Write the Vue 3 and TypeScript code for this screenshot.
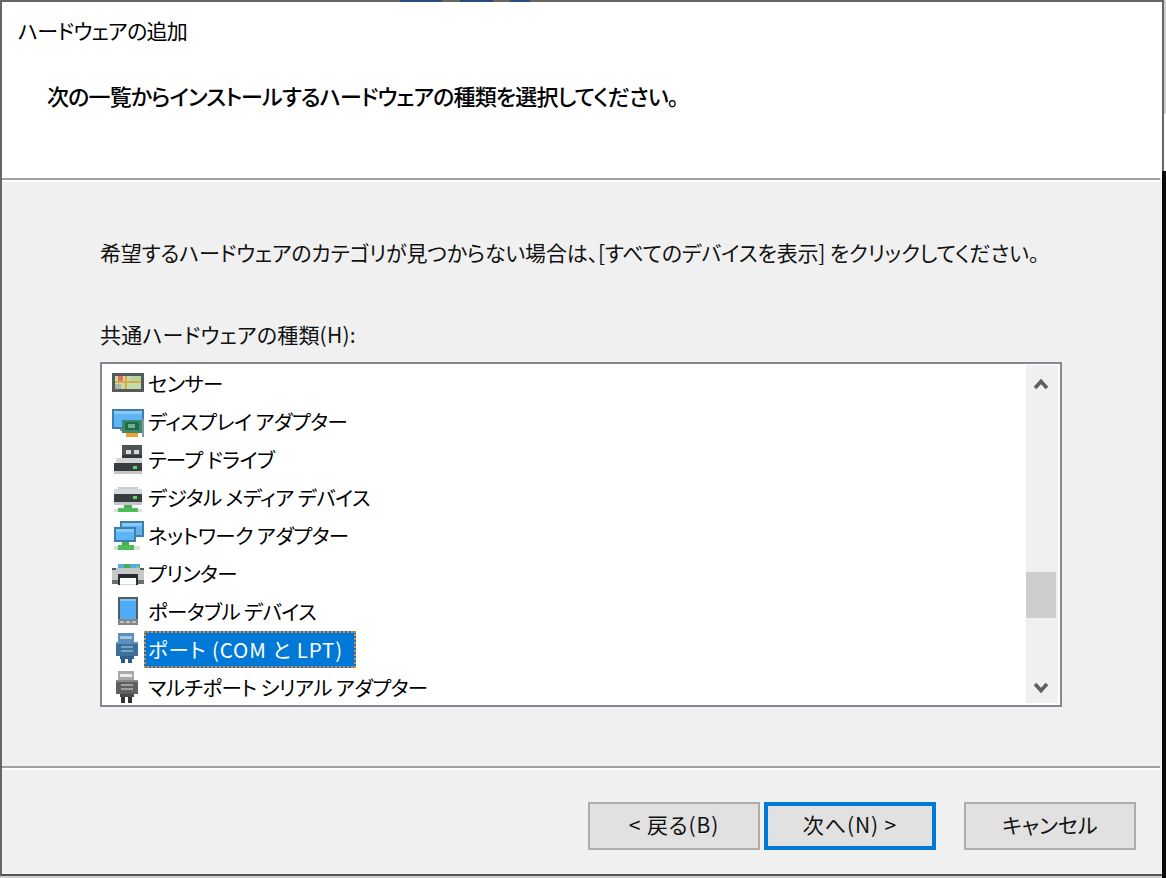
<script setup lang="ts">
type Rect = [number, number, number, number, string]

const monitor = (x: number, y: number, w: number, h: number): Rect[] => [
  [x, y, w, h, '#3f7ea6'],
  [x + 2, y + 2, w - 4, h - 4, '#5db4f6'],
  [x + 2, y + 2, w - 4, 3, '#86c9f8'],
]

const icons: Record<string, Rect[]> = {
  sensor: [
    [0, 6, 32, 19, '#555a5a'],
    [3, 9, 26, 13, '#c5dba8'],
    [3, 14, 26, 2, '#d9a94c'],
    [13, 9, 2, 13, '#d9a94c'],
    [6, 9, 5, 5, '#ea6a6a'],
    [3, 17, 6, 5, '#a9b8a0'],
    [19, 9, 10, 5, '#b5d49c'],
  ],
  display: [
    ...monitor(0, 4, 32, 20),
    [8, 24, 8, 2, '#7f8f9a'],
    [10, 15, 21, 13, '#3c8a6a'],
    [13, 17, 14, 8, '#1f6b4c'],
    [16, 19, 7, 4, '#70b090'],
    [14, 28, 12, 4, '#f0a030'],
    [30, 14, 2, 18, '#8b979e'],
  ],
  tape: [
    [10, 2, 20, 14, '#4e5358'],
    [14, 7, 5, 4, '#d8d8d8'],
    [22, 7, 5, 4, '#d8d8d8'],
    [10, 12, 20, 3, '#33373a'],
    [4, 15, 26, 5, '#d3d5d6'],
    [2, 20, 28, 8, '#3a3d3f'],
    [21, 23, 4, 3, '#55dd55'],
    [2, 28, 28, 3, '#c4c6c7'],
  ],
  media: [
    [6, 6, 20, 2, '#c9cbcc'],
    [2, 8, 28, 5, '#d6d8d9'],
    [2, 13, 28, 8, '#3a3d3f'],
    [21, 15, 4, 3, '#55dd55'],
    [2, 21, 28, 3, '#c4c6c7'],
    [12, 24, 8, 4, '#45b04d'],
    [2, 28, 28, 3, '#dcdfdc'],
    [6, 27, 20, 4, '#50bd58'],
  ],
  network: [
    ...monitor(8, 2, 24, 16),
    ...monitor(2, 8, 22, 15),
    [10, 23, 7, 4, '#45b04d'],
    [2, 27, 26, 4, '#dcdfdc'],
    [6, 26, 16, 5, '#50bd58'],
  ],
  printer: [
    [6, 7, 22, 6, '#5aa9e0'],
    [12, 7, 6, 6, '#45b04d'],
    [24, 9, 3, 3, '#55dd55'],
    [0, 11, 32, 14, '#c6c9ca'],
    [0, 11, 4, 2, '#555a5a'],
    [28, 11, 4, 2, '#555a5a'],
    [0, 23, 32, 4, '#6a6e70'],
    [6, 17, 20, 3, '#2b2d2f'],
    [6, 20, 20, 8, '#2b2d2f'],
    [8, 21, 16, 8, '#ffffff'],
    [8, 27, 16, 1, '#d8d8d8'],
  ],
  portable: [
    [6, 2, 20, 28, '#565a5e'],
    [8, 4, 16, 20, '#4eadf6'],
    [8, 4, 16, 2, '#7cc5f8'],
    [6, 24, 20, 6, '#80868a'],
    [8, 26, 4, 2, '#bcc0c2'],
    [14, 26, 4, 2, '#bcc0c2'],
    [20, 26, 4, 2, '#bcc0c2'],
  ],
  port: [
    [6, 0, 16, 9, '#5b8fc0'],
    [8, 3, 12, 3, '#a5c4de'],
    [4, 9, 22, 14, '#3d7099'],
    [4, 9, 22, 2, '#5b8fc0'],
    [9, 13, 12, 2, '#7ba4c4'],
    [9, 17, 12, 2, '#7ba4c4'],
    [8, 23, 14, 3, '#2f608a'],
    [9, 26, 4, 4, '#245a8c'],
    [16, 26, 4, 4, '#245a8c'],
  ],
  multi: [
    [6, 0, 16, 9, '#a8a8a8'],
    [8, 3, 12, 3, '#ececec'],
    [4, 9, 22, 14, '#606060'],
    [4, 9, 22, 2, '#8a8a8a'],
    [9, 13, 12, 2, '#a0a0a0'],
    [9, 17, 12, 2, '#a0a0a0'],
    [8, 23, 14, 3, '#484848'],
    [9, 26, 4, 6, '#333333'],
    [16, 26, 4, 6, '#333333'],
  ],
}

const rows = [
  { icon: 'sensor', label: 'センサー', selected: false },
  { icon: 'display', label: 'ディスプレイ アダプター', selected: false },
  { icon: 'tape', label: 'テープ ドライブ', selected: false },
  { icon: 'media', label: 'デジタル メディア デバイス', selected: false },
  { icon: 'network', label: 'ネットワーク アダプター', selected: false },
  { icon: 'printer', label: 'プリンター', selected: false },
  { icon: 'portable', label: 'ポータブル デバイス', selected: false },
  { icon: 'port', label: 'ポート (COM と LPT)', selected: true },
  { icon: 'multi', label: 'マルチポート シリアル アダプター', selected: false },
]
</script>

<template>
  <div class="screen">
    <div class="topline">
      <span class="seg seg-a"></span>
      <span class="seg seg-b"></span>
      <span class="seg seg-c"></span>
    </div>
    <div class="dialog">
      <header class="head">
        <div class="title">ハードウェアの追加</div>
        <h1 class="heading">次の一覧からインストールするハードウェアの種類を選択してください。</h1>
      </header>
      <div class="rule"></div>
      <main class="content">
        <p class="intro">希望するハードウェアのカテゴリが見つからない場合は、[すべてのデバイスを表示] をクリックしてください。</p>
        <div class="label">共通ハードウェアの種類(H):</div>
        <div class="listbox">
          <ul class="items">
            <li v-for="row in rows" :key="row.icon" class="item">
              <svg class="icon" viewBox="0 0 32 32" width="32" height="32" shape-rendering="crispEdges" aria-hidden="true">
                <rect
                  v-for="(r, i) in icons[row.icon]"
                  :key="i"
                  :x="r[0]"
                  :y="r[1]"
                  :width="r[2]"
                  :height="r[3]"
                  :fill="r[4]"
                />
              </svg>
              <span class="text" :class="{ selected: row.selected }">{{ row.label }}</span>
            </li>
          </ul>
          <div class="scrollbar">
            <svg class="arrow" viewBox="0 0 30 36" width="30" height="36" aria-hidden="true">
              <path d="M9 23 L15 16.5 L21 23" fill="none" stroke="#606060" stroke-width="3.6" />
            </svg>
            <div class="gap-a"></div>
            <div class="thumb"></div>
            <div class="gap-b"></div>
            <svg class="arrow" viewBox="0 0 30 36" width="30" height="36" aria-hidden="true">
              <path d="M9 17 L15 23.5 L21 17" fill="none" stroke="#606060" stroke-width="3.6" />
            </svg>
          </div>
        </div>
      </main>
      <div class="rule rule-bottom"></div>
      <footer class="foot">
        <button class="btn" type="button">&lt; 戻る(B)</button>
        <button class="btn default" type="button">次へ(N) &gt;</button>
        <button class="btn cancel" type="button">キャンセル</button>
      </footer>
    </div>
    <div class="edge-upper"></div>
    <div class="edge"></div>
  </div>
</template>

<style>
html,
body {
  margin: 0;
  background: #d0d0d0;
}
</style>

<style scoped>
.screen {
  position: relative;
  width: 1166px;
  height: 878px;
  overflow: hidden;
  font-family: "Noto Sans CJK JP", "Noto Sans", sans-serif;
  font-feature-settings: "palt";
  color: #000;
  background: #d0d0d0;
}
.topline {
  height: 2px;
  width: 1164px;
  background: #666;
  position: relative;
}
.seg {
  position: absolute;
  top: 0;
  height: 2px;
  background: #2b4a7c;
}
.seg-a { left: 400px; width: 42px; }
.seg-b { left: 460px; width: 33px; }
.seg-c { left: 510px; width: 20px; }
.dialog {
  width: 1160px;
  height: 872px;
  border-left: 2px solid #666;
  border-right: 2px solid #666;
  border-bottom: 2px solid #555;
  display: flex;
  flex-direction: column;
  background: #f0f0f0;
}
.head {
  height: 176px;
  box-sizing: border-box;
  background: #fff;
  padding: 14px 0 0 16px;
}
.title {
  font-size: 21px;
  line-height: 28px;
  letter-spacing: -0.7px;
}
.heading {
  margin: 36px 0 0 29px;
  font-size: 22px;
  line-height: 30px;
  font-weight: 500;
  letter-spacing: -0.85px;
}
.rule {
  height: 2px;
  margin-right: 2px;
  background: #a0a0a0;
  border-bottom: 2px solid #fff;
  flex: none;
}
.content {
  height: 584px;
  box-sizing: border-box;
  padding: 55px 0 0 98px;
  flex: none;
}
.intro {
  margin: 0;
  font-size: 21px;
  line-height: 30px;
  color: #111;
  letter-spacing: -0.17px;
  white-space: nowrap;
}
.label {
  margin-top: 53px;
  font-size: 21px;
  line-height: 28px;
  color: #111;
  letter-spacing: 0.2px;
}
.listbox {
  margin-top: 14px;
  width: 958px;
  height: 341px;
  border: 2px solid #828790;
  background: #fff;
  display: flex;
  overflow: hidden;
}
.items {
  list-style: none;
  margin: 0;
  padding: 0;
  width: 924px;
  flex: none;
}
.item {
  height: 38px;
  display: flex;
  align-items: center;
  padding-left: 10px;
}
.icon {
  flex: none;
  display: block;
}
.text {
  font-size: 20.5px;
  line-height: 37px;
  height: 37px;
  box-sizing: border-box;
  padding: 0 4px;
  white-space: nowrap;
  letter-spacing: -0.6px;
  color: #000;
}
.text.selected {
  background: #0078d7;
  color: #fff;
  letter-spacing: 0.9px;
  padding-right: 13px;
  outline: 2px dotted #f08a30;
  outline-offset: -2px;
}
.scrollbar {
  width: 32px;
  height: 338px;
  margin-top: 1px;
  background: #f0f0f0;
  display: flex;
  flex-direction: column;
  flex: none;
}
.arrow {
  display: block;
  flex: none;
}
.gap-a {
  height: 171px;
  flex: none;
}
.thumb {
  width: 30px;
  height: 46px;
  background: #cdcdcd;
  flex: none;
}
.gap-b {
  flex: 1;
}
.foot {
  flex: 1;
  display: flex;
  padding: 32px 0 0 586px;
  background: #f0f0f0;
}
.btn {
  width: 172px;
  height: 48px;
  box-sizing: border-box;
  border: 2px solid #adadad;
  background: #e1e1e1;
  font-family: inherit;
  font-feature-settings: inherit;
  font-size: 21px;
  letter-spacing: 0.9px;
  color: #111;
  padding: 0 0 5px;
}
.btn.default {
  margin-left: 4px;
  border: 4px solid #0078d7;
}
.btn.cancel {
  margin-left: 28px;
  letter-spacing: 0.1px;
}
.edge-upper {
  position: absolute;
  right: 0;
  top: 114px;
  width: 2px;
  height: 57px;
  background: #fff;
}
.edge {
  position: absolute;
  right: 0;
  top: 171px;
  width: 4px;
  height: 707px;
  background: #0a0a0a;
}
</style>
